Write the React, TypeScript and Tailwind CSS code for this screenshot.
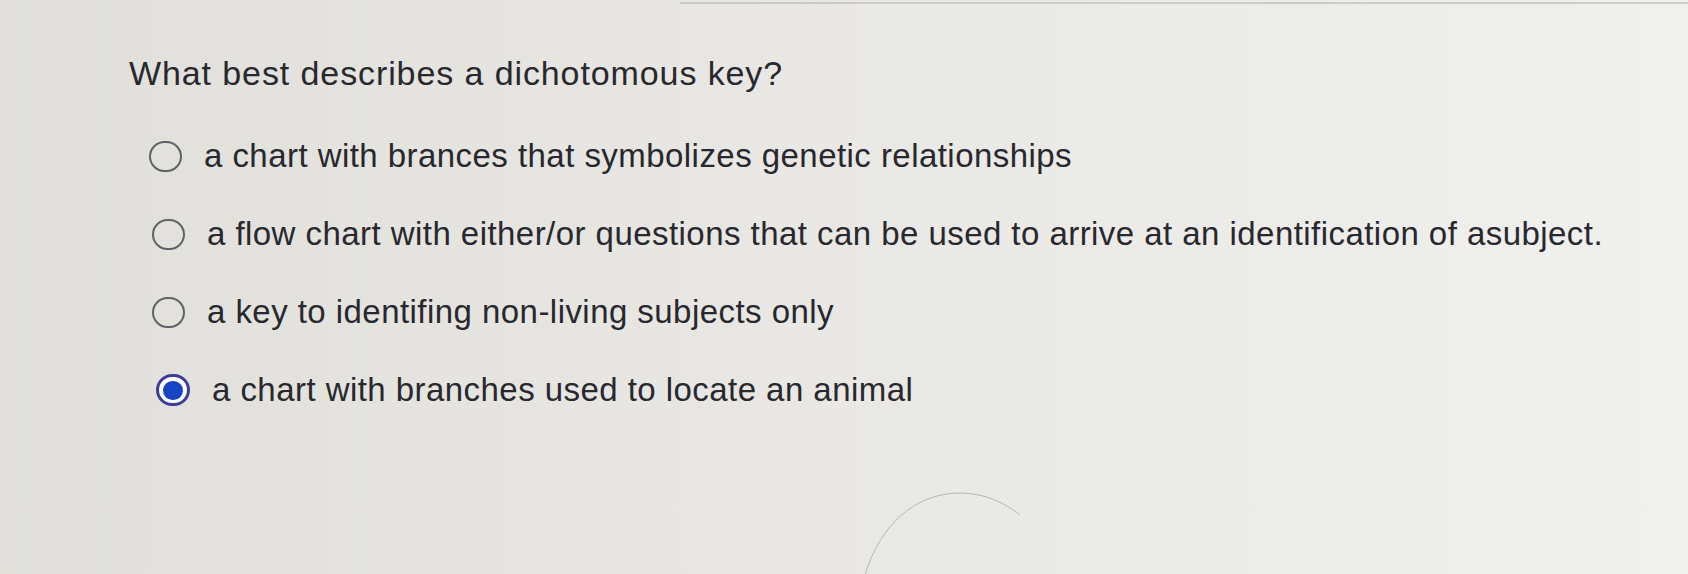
const options = [
  { label: "a chart with brances that symbolizes genetic relationships", shift: "ml-0", checked: false },
  {
    label: "a flow chart with either/or questions that can be used to arrive at an identification of asubject.",
    shift: "ml-[3px]",
    checked: false,
  },
  { label: "a key to identifing non-living subjects only", shift: "ml-[3px]", checked: false },
  { label: "a chart with branches used to locate an animal", shift: "ml-[7px]", checked: true },
];

function Radio({ checked }: { checked: boolean }) {
  if (checked) {
    return (
      <span className="flex h-[32px] w-[34px] shrink-0 items-center justify-center rounded-full border-[3px] border-[#3b3e96] bg-white">
        <span className="h-[19px] w-[20px] rounded-full bg-[#1644c4]" />
      </span>
    );
  }
  return <span className="h-[31px] w-[33px] shrink-0 rounded-full border-2 border-[#616166]" />;
}

export default function App() {
  return (
    <div className="relative h-[574px] w-full overflow-hidden bg-gradient-to-r from-[#e0dfda] via-[#e9e8e4] to-[#f0f0ee] font-['Liberation_Sans',Arial,sans-serif] text-[#28282e]">
      <div className="ml-[680px] h-[4px] border-b-2 border-[#bdbdbb] opacity-70" />
      <div className="pl-[129px] pt-[49px]">
        <h1 className="text-[34px] leading-[40px] tracking-[0.9px]">What best describes a dichotomous key?</h1>
        <ul className="mt-[24px] pl-[20px]">
          {options.map((o) => (
            <li key={o.label} className={`flex h-[78px] items-center gap-[22px] ${o.shift}`}>
              <Radio checked={o.checked} />
              <span className="text-[33px] leading-[40px] tracking-[0.45px]">{o.label}</span>
            </li>
          ))}
        </ul>
      </div>
      <svg className="absolute left-[860px] top-[485px]" width="180" height="90" viewBox="0 0 180 90" fill="none">
        <path d="M5 90 C20 40 55 8 100 8 C125 8 145 18 160 30" stroke="#b8b8b0" strokeWidth="1" />
      </svg>
    </div>
  );
}
